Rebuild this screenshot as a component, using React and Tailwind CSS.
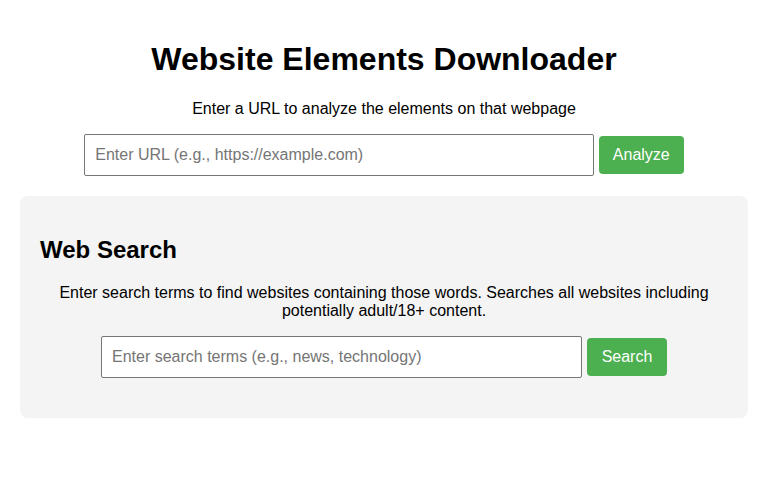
export default function App() {
  return (
    <div className="min-h-screen bg-white p-5 text-black font-['Liberation_Sans',Arial,sans-serif]">
      <h1 className="my-[21.44px] text-center text-[32px] font-bold leading-[37px]">
        Website Elements Downloader
      </h1>
      <p className="mb-4 text-center text-base leading-[18.4px]">
        Enter a URL to analyze the elements on that webpage
      </p>
      <div className="flex items-center justify-center gap-[5px]">
        <input
          type="text"
          placeholder="Enter URL (e.g., https://example.com)"
          className="h-[42px] w-[70%] rounded-[2px] border border-[#767676] px-[10px] text-base placeholder:text-[#757575] outline-none"
        />
        <button className="h-[38px] rounded bg-[#4CAF50] px-[14px] text-base text-white">
          Analyze
        </button>
      </div>

      <div className="mt-5 rounded-lg bg-[#f4f4f4] p-5">
        <h2 className="my-[19.92px] text-2xl font-bold leading-[27.6px]">Web Search</h2>
        <p className="mb-[15.5px] text-center text-base leading-[18.4px]">
          Enter search terms to find websites containing those words. Searches all websites including potentially adult/18+ content.
        </p>
        <div className="mb-5 flex items-center justify-center gap-[5px]">
          <input
            type="text"
            placeholder="Enter search terms (e.g., news, technology)"
            className="h-[42px] w-[481px] rounded-[2px] border border-[#767676] bg-white px-[10px] text-base placeholder:text-[#757575] outline-none"
          />
          <button className="h-[38px] w-[80px] rounded bg-[#4CAF50] text-base text-white">
            Search
          </button>
        </div>
      </div>
    </div>
  );
}
